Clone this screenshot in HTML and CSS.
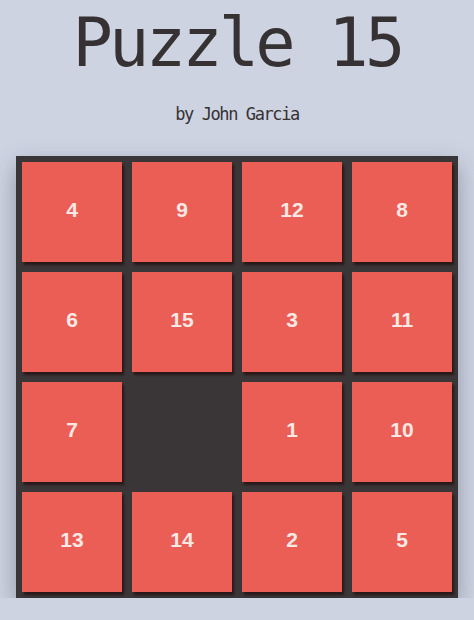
FILE: index.html
```html
<!DOCTYPE html>
<html lang="en">
<head>
  <meta charset="UTF-8">
  <meta name="viewport" content="width=device-width, initial-scale=1.0">
  <title>Puzzle 15</title>
  <link rel="stylesheet" href="styles.css">
</head>
<body>

  <h1>Puzzle 15</h1>
  <p class="author">by John Garcia</p>

  <div class="board" id="board">
    <div class="tile">4</div>
    <div class="tile">9</div>
    <div class="tile">12</div>
    <div class="tile">8</div>
    <div class="tile">6</div>
    <div class="tile">15</div>
    <div class="tile">3</div>
    <div class="tile">11</div>
    <div class="tile">7</div>
    <div class="tile empty"></div>
    <div class="tile">1</div>
    <div class="tile">10</div>
    <div class="tile">13</div>
    <div class="tile">14</div>
    <div class="tile">2</div>
    <div class="tile">5</div>
  </div>

</body>
</html>
```

FILE: styles.css
```css
body {
  font-family: 'DejaVu Sans Mono', monospace;
  background-color: #cdd3e1;
  color: #363133;
  margin: 0;
  padding: 10px 0 0;
}
h1 {
  text-align: center;
  font-size: 67px;
  font-weight: normal;
  line-height: 67px;
  letter-spacing: -3.8px;
  margin: 0 0 29px;
}
.author {
  text-align: center;
  font-size: 17px;
  line-height: 17px;
  letter-spacing: -1.4px;
  margin: 0 0 33px;
}
.board {
  box-sizing: border-box;
  width: 442px;
  height: 442px;
  margin: 0 auto;
  padding: 6px;
  display: grid;
  grid-template-columns: repeat(4, 100px);
  grid-template-rows: repeat(4, 100px);
  gap: 10px;
  background-color: #3a3537;
  box-shadow: 0 10px 22px rgba(40, 40, 60, 0.35);
}
.tile {
  display: flex;
  align-items: center;
  justify-content: center;
  padding-bottom: 4px;
  box-sizing: border-box;
  background-color: #ea5e56;
  color: #fbe8e4;
  font-family: 'Liberation Sans', Arial, sans-serif;
  font-size: 21px;
  font-weight: bold;
  box-shadow: 2px 3px 2px rgba(30, 0, 0, 0.55);
}
.tile.empty {
  background-color: transparent;
  box-shadow: none;
}
```
